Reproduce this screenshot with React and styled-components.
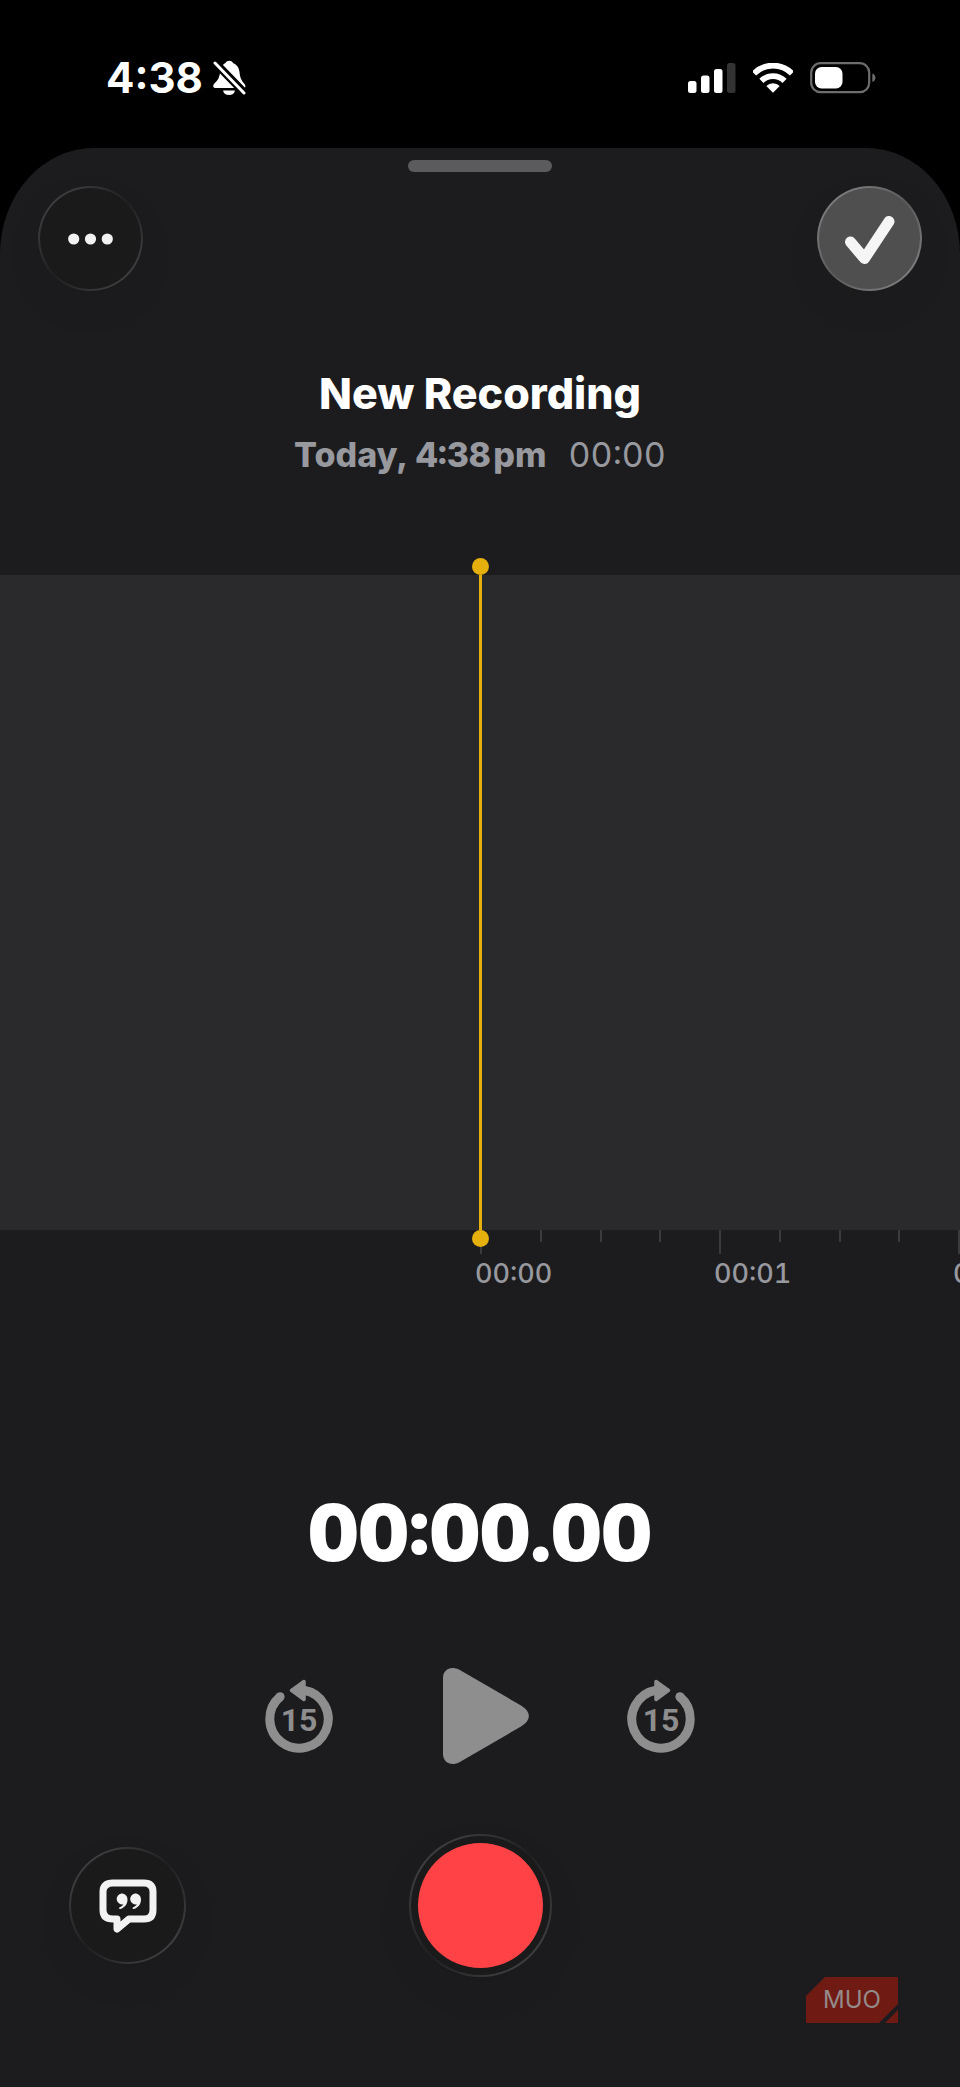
import { useState } from "react";
import styled, { createGlobalStyle } from "styled-components";

const GlobalStyle = createGlobalStyle`
  * {
    box-sizing: border-box;
  }
  body {
    margin: 0;
    background: #000;
    color: #fff;
    font-family: Inter, "Liberation Sans", sans-serif;
  }
`

const Screen = styled.div`
  display: flex;
  flex-direction: column;
  min-height: 100vh;
  overflow-x: hidden;
`

const StatusBar = styled.header`
  display: flex;
  align-items: center;
  justify-content: space-between;
  padding: 54px 84px 46px 106px;
`

const StatusGroup = styled.div`
  display: flex;
  align-items: center;
  gap: ${({ $gap }) => $gap}px;
  svg {
    display: block;
  }
`

const Clock = styled.time`
  font-size: 42px;
  line-height: 48px;
  font-weight: 700;
`

const Sheet = styled.main`
  position: relative;
  flex: 1;
  display: flex;
  flex-direction: column;
  padding: 12px 0 110px;
  background: #1c1c1e;
  border-radius: 94px 94px 0 0 / 106px 106px 0 0;
`

const Grabber = styled.div`
  align-self: center;
  width: 144px;
  height: 12px;
  border-radius: 6px;
  background: #5b5b5d;
`

const Toolbar = styled.div`
  display: flex;
  justify-content: space-between;
  padding: 14px 38px 0;
`

const RoundButton = styled.button`
  display: flex;
  align-items: center;
  justify-content: center;
  width: ${({ $size }) => $size}px;
  height: ${({ $size }) => $size}px;
  padding: 0;
  border: 2px solid transparent;
  border-radius: 50%;
  background:
    linear-gradient(${({ $fill }) => $fill || "#1a1a1b"} 0 0) padding-box,
    ${({ $fill }) => $fill
      ? "linear-gradient(135deg, #8a8a8c, #5a5a5b 50%, #8a8a8c) border-box"
      : "linear-gradient(135deg, #4a4a4c, #202022 50%, #4a4a4c) border-box"};
  box-shadow: 0 16px 40px rgb(0 0 0 / 6%);
  cursor: pointer;
  svg {
    flex: none;
  }
`

const RecordDot = styled.span`
  width: 125px;
  height: 125px;
  border-radius: 50%;
  background: #ff4245;
`

const Heading = styled.section`
  display: flex;
  flex-direction: column;
  align-items: center;
  gap: 16px;
  padding: 77px 0 99px;
`

const Title = styled.h1`
  margin: 0;
  font-size: 43px;
  line-height: 50px;
  font-weight: 800;
`

const Meta = styled.p`
  display: flex;
  gap: 22px;
  margin: 0;
  font-size: 34px;
  line-height: 42px;
  color: #98989f;
  font-variant-numeric: tabular-nums;
  strong {
    font-weight: 800;
  }
`

const Waveform = styled.section`
  position: relative;
  height: 655px;
  background: #2a2a2c;
`

const Playhead = styled.div`
  position: absolute;
  z-index: 1;
  top: 0;
  bottom: 0;
  left: 50%;
  width: 3px;
  margin-left: -1px;
  background: #e5af0d;
  &::before,
  &::after {
    content: "";
    position: absolute;
    left: -7px;
    width: 17px;
    height: 17px;
    border-radius: 50%;
    background: #e5af0d;
  }
  &::before {
    top: -17px;
  }
  &::after {
    bottom: -17px;
  }
`

const Ruler = styled.div`
  display: flex;
  padding-left: 50%;
  overflow: hidden;
`

const Second = styled.div`
  flex: none;
  width: 239px;
  font-size: 27px;
  line-height: 32px;
  font-weight: 500;
  color: #98989f;
  font-variant-numeric: tabular-nums;
`

const Ticks = styled.div`
  display: grid;
  grid-template-columns: repeat(4, 1fr);
  height: 24px;
  margin-bottom: 4px;
`

const Tick = styled.span`
  height: ${({ $major }) => ($major ? 24 : 12)}px;
  border-left: 2px solid #3b3b3f;
`

const TickLabel = styled.div`
  margin-left: -5px;
`

const Timer = styled.div`
  padding: 197px 0 88px;
  text-align: center;
  font-size: 78px;
  line-height: 92px;
  font-weight: 900;
  font-variant-numeric: tabular-nums;
`

const Transport = styled.div`
  display: flex;
  align-items: center;
  justify-content: center;
  gap: 98px;
  padding-bottom: 69px;
`

const IconButton = styled.button`
  display: flex;
  padding: 0;
  border: none;
  background: none;
  color: #8e8e8e;
  cursor: pointer;
  text {
    font-family: Roboto, "Liberation Sans", sans-serif;
    font-size: 32px;
    font-weight: 700;
    text-anchor: middle;
  }
`

const Controls = styled.div`
  display: grid;
  grid-template-columns: 1fr auto 1fr;
  align-items: center;
  padding: 0 69px;
`

const Watermark = styled.div`
  position: absolute;
  right: 62px;
  bottom: 64px;
  svg {
    display: block;
  }
  text {
    font-family: Inter, "Liberation Sans", sans-serif;
    font-size: 24px;
    font-weight: 400;
    text-anchor: middle;
  }
`

function BellOffIcon() {
  return (
    <svg width="33" height="36" viewBox="0 0 33 36" role="img" aria-label="Silent mode">
      <path
        fill="#fff"
        d="M2 28C0 28-.3 25.600 1 24C5 20 6.500 17.500 7 12.500C7.500 7 10 4 12.500 3C13.200 1.500 14.500 .8 16.200 .8C18 .8 19.300 1.500 20 3C24 4.500 26 7.500 26.500 12C27 17 28 20 31.500 24C33 25.600 32.500 28 31 28Z"
      />
      <path fill="#fff" d="M10 30.500H22C21.500 33.500 19 35 16 35S10.500 33.500 10 30.500Z" />
      <path stroke="#000" strokeWidth="8" d="M1 1.500L33 34.500" />
      <path stroke="#fff" strokeWidth="3" strokeLinecap="round" d="M2 3L31 33" />
    </svg>
  )
}

function SignalIcon() {
  return (
    <svg width="48" height="30" viewBox="0 0 48 30" role="img" aria-label="Signal, 3 of 4 bars">
      <g fill="#fff">
        <rect x="0" y="18" width="8.500" height="12" rx="2.500" />
        <rect x="13" y="12.500" width="8.500" height="17.500" rx="2.500" />
        <rect x="26" y="6" width="8.500" height="24" rx="2.500" />
      </g>
      <rect x="39" y="0" width="8.500" height="30" rx="2.500" fill="#333" />
    </svg>
  )
}

function WifiIcon() {
  return (
    <svg width="40" height="30" viewBox="0 0 40 30" role="img" aria-label="Wi-Fi">
      <g fill="none" stroke="#fff" strokeWidth="5.800">
        <path d="M1 10.500A26.800 26.800 0 0 1 39 10.500" />
        <path d="M8.400 17.900A16.400 16.400 0 0 1 31.600 17.900" />
      </g>
      <path fill="#fff" d="M20 29.700L13.300 23A9.600 9.600 0 0 1 26.700 23Z" />
    </svg>
  )
}

function BatteryIcon() {
  return (
    <svg width="66" height="32" viewBox="0 0 66 32" role="img" aria-label="Battery, 50 percent">
      <rect x="1.200" y="1.200" width="58" height="29" rx="9.500" fill="none" stroke="#6d6d6d" strokeWidth="2.200" />
      <rect x="5" y="5" width="27.500" height="21.500" rx="6.500" fill="#fff" />
      <path fill="#6d6d6d" d="M62.300 11.500C66.500 13 66.500 18.500 62.300 20Z" />
    </svg>
  )
}

function MoreIcon() {
  return (
    <svg width="46" height="12" viewBox="0 0 46 12" fill="#f2f2f2" aria-hidden="true">
      <circle cx="5.700" cy="6" r="5.600" />
      <circle cx="22.500" cy="6" r="5.600" />
      <circle cx="39.300" cy="6" r="5.600" />
    </svg>
  )
}

function CheckIcon() {
  return (
    <svg width="52" height="50" viewBox="0 0 52 50" fill="none" aria-hidden="true">
      <path
        d="M6.500 28L20.500 44.500L45 7.500"
        stroke="#f5f5f5"
        strokeWidth="11"
        strokeLinecap="round"
        strokeLinejoin="round"
      />
    </svg>
  )
}

// The back arrow is the forward one mirrored, the number stays readable
function SkipIcon({ back }) {
  return (
    <svg width="68" height="74" viewBox="0 0 68 74" fill="currentColor" aria-hidden="true">
      <g transform={back ? "matrix(-1 0 0 1 68 0)" : undefined}>
        <path
          d="M52.900 17.700A29.200 29.200 0 1 1 29 11.200"
          fill="none"
          stroke="currentColor"
          strokeWidth="9"
        />
        <circle cx="52.900" cy="17.700" r="4.500" />
        <path
          d="M29 2.500L41.500 11.400L29 20.500Z"
          stroke="currentColor"
          strokeWidth="3.500"
          strokeLinejoin="round"
        />
      </g>
      <text x="34" y="52">15</text>
    </svg>
  )
}

function PlayIcon() {
  return (
    <svg width="98" height="98" viewBox="0 0 98 98" aria-hidden="true">
      <path
        d="M12 11C12 2.500 19.500-1.500 28 2.500L90 38.500C100.500 45 100.500 53 90 59.500L28 95.500C19.500 99.500 12 95 12 87Z"
        fill="currentColor"
      />
    </svg>
  )
}

function TranscriptIcon() {
  return (
    <svg width="58" height="54" viewBox="29 32 58 54" aria-hidden="true">
      <path
        d="M43 36H74Q83 36 83 45V63Q83 72 74 72H59L47 82V72H43Q33 72 33 63V45Q33 36 43 36Z"
        fill="none"
        stroke="#f2f2f2"
        strokeWidth="7"
        strokeLinejoin="round"
      />
      <g fill="#f2f2f2">
        <path d="M51.500 46.500A5.500 5.500 0 1 0 53.500 57.300C52.600 58.800 51.300 59.700 49.700 60.300C48.500 60.800 49 62.300 50.300 62C54.800 60.700 57.500 57 57.500 52.500C57.500 49 55 46.500 51.500 46.500Z" />
        <path d="M65 46.500A5.500 5.500 0 1 0 67 57.300C66.100 58.800 64.800 59.700 63.200 60.300C62 60.800 62.500 62.300 63.800 62C68.300 60.700 71 57 71 52.500C71 49 68.500 46.500 65 46.500Z" />
      </g>
    </svg>
  )
}

const seconds = ["00:00", "00:01", "00:02"]

export default function App() {
  const [recording, setRecording] = useState(false)

  return (
    <Screen>
      <GlobalStyle />
      <StatusBar>
        <StatusGroup $gap={10}>
          <Clock>4:38</Clock>
          <BellOffIcon />
        </StatusGroup>
        <StatusGroup $gap={17}>
          <SignalIcon />
          <WifiIcon />
          <BatteryIcon />
        </StatusGroup>
      </StatusBar>
      <Sheet>
        <Grabber />
        <Toolbar>
          <RoundButton type="button" $size={105} aria-label="More options">
            <MoreIcon />
          </RoundButton>
          <RoundButton type="button" $size={105} $fill="#4f4f4f" aria-label="Done">
            <CheckIcon />
          </RoundButton>
        </Toolbar>
        <Heading>
          <Title>New Recording</Title>
          <Meta>
            <strong>Today, 4:38{"\u200a"}pm</strong>
            <span>00:00</span>
          </Meta>
        </Heading>
        <Waveform aria-label="Waveform">
          <Playhead />
        </Waveform>
        <Ruler>
          {seconds.map((second) => (
            <Second key={second}>
              <Ticks>
                <Tick $major />
                <Tick />
                <Tick />
                <Tick />
              </Ticks>
              <TickLabel>{second}</TickLabel>
            </Second>
          ))}
        </Ruler>
        <Timer role="timer">00:00.00</Timer>
        <Transport>
          <IconButton type="button" aria-label="Back 15 seconds">
            <SkipIcon back />
          </IconButton>
          <IconButton type="button" aria-label="Play">
            <PlayIcon />
          </IconButton>
          <IconButton type="button" aria-label="Forward 15 seconds">
            <SkipIcon />
          </IconButton>
        </Transport>
        <Controls>
          <RoundButton type="button" $size={117} aria-label="Transcript">
            <TranscriptIcon />
          </RoundButton>
          <RoundButton
            type="button"
            $size={143}
            aria-label="Record"
            aria-pressed={recording}
            onClick={() => setRecording(!recording)}
          >
            <RecordDot />
          </RoundButton>
        </Controls>
        <Watermark>
          <svg width="92" height="46" viewBox="0 0 92 46">
            <path fill="#701a14" d="M19 0H92V27L73 46H0V19Z" />
            <path fill="#701a14" d="M92 33V46H79Z" />
            <text x="46" y="31" fill="#948a8a">MUO</text>
          </svg>
        </Watermark>
      </Sheet>
    </Screen>
  )
}
